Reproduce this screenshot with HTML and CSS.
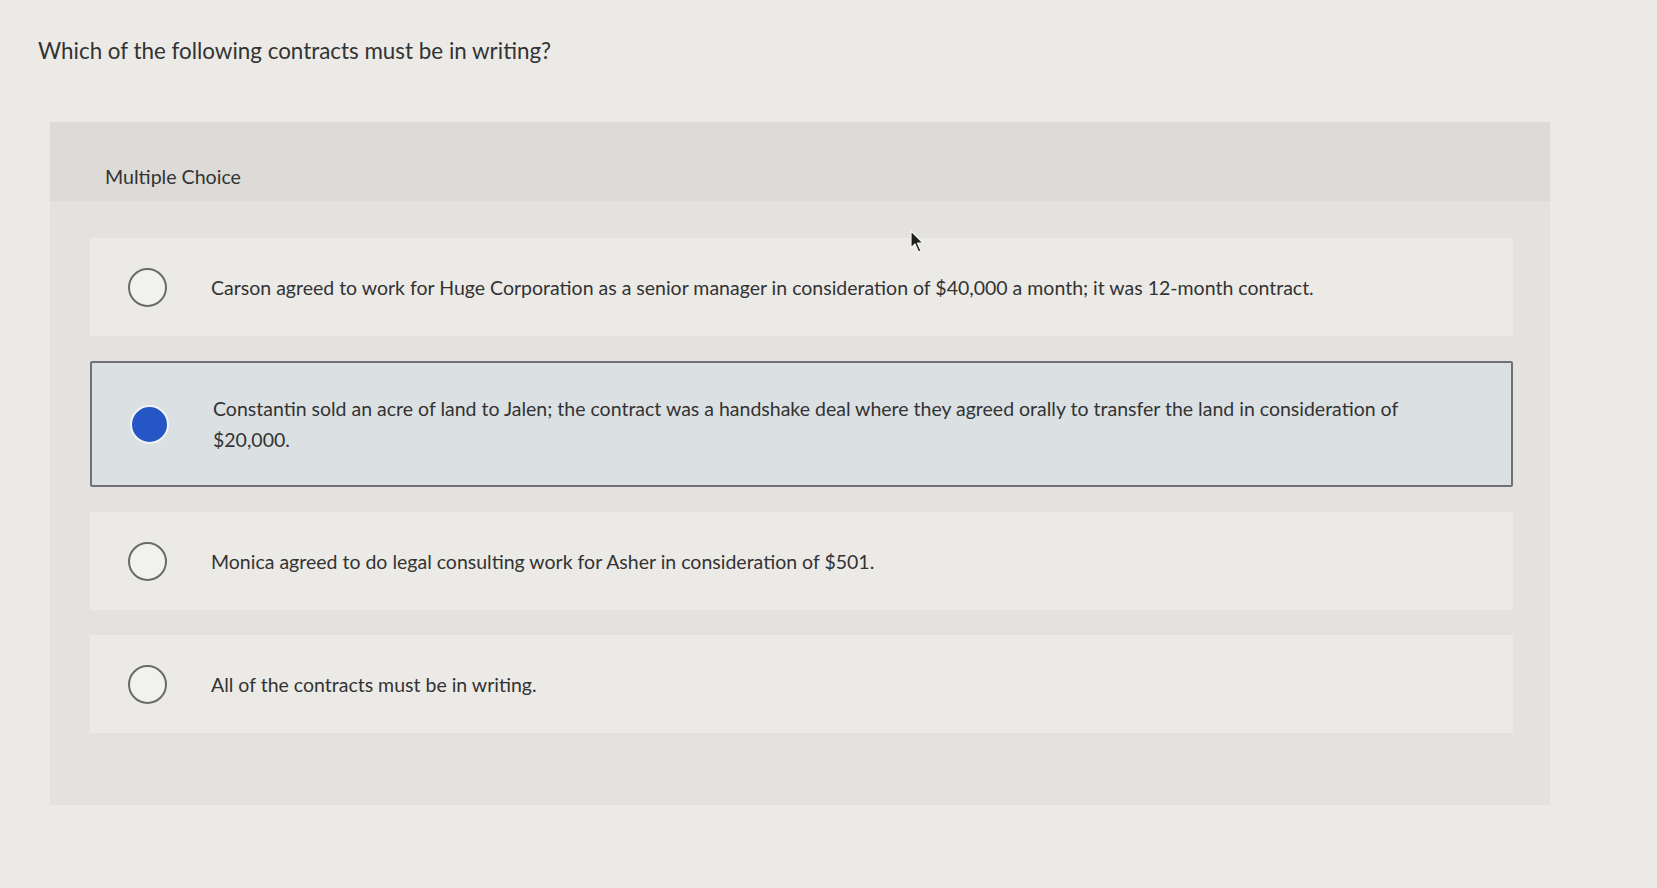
FILE: index.html
```html
<!DOCTYPE html>
<html lang="en">
<head>
  <meta charset="UTF-8" />
  <meta name="viewport" content="width=device-width, initial-scale=1" />
  <title>Multiple Choice</title>
  <link rel="stylesheet" href="styles.css">
</head>
<body>

  <p class="question">Which of the following contracts must be in writing?</p>

  <div class="panel">
    <div class="panel-header">Multiple Choice</div>

    <div class="panel-body">
      <label class="option">
        <span class="radio"></span>
        <span class="option-text">Carson agreed to work for Huge Corporation as a senior manager in consideration of $40,000 a month; it was 12-month contract.</span>
      </label>

      <label class="option selected">
        <span class="radio"></span>
        <span class="option-text">Constantin sold an acre of land to Jalen; the contract was a handshake deal where they agreed orally to transfer the land in consideration of $20,000.</span>
      </label>

      <label class="option">
        <span class="radio"></span>
        <span class="option-text">Monica agreed to do legal consulting work for Asher in consideration of $501.</span>
      </label>

      <label class="option">
        <span class="radio"></span>
        <span class="option-text">All of the contracts must be in writing.</span>
      </label>
    </div>
  </div>

  <!-- mouse pointer -->
  <svg class="cursor" width="16" height="24" viewBox="0 0 16 24">
    <path d="M1 1 L1 18 L5 14 L8.5 22 L11 21 L7.5 13 L13 13 Z" fill="#1e1e1e" stroke="#f4f4f4" stroke-width="1.2" stroke-linejoin="round"/>
  </svg>

</body>
</html>
```

FILE: styles.css
```css
body {
  margin: 0;
  background: #ebeae7;
  font-family: Lato, "Open Sans", Arial, sans-serif;
  color: #333333;
  position: relative;
  min-height: 888px;
}

.question {
  margin: 0;
  padding: 38px 0 0 38px;
  font-size: 22.4px;
  line-height: 26px;
}

.panel {
  margin: 58px 107px 0 50px;
  background: #e3e2df;
}

.panel-header {
  height: 79px;
  box-sizing: border-box;
  padding: 43px 0 0 55px;
  background: #dcdbd8;
  font-size: 19.6px;
  line-height: 24px;
}

.panel-body {
  display: flex;
  flex-direction: column;
  gap: 25px;
  padding: 37px 37px 72px 40px;
}

.option {
  display: flex;
  align-items: center;
  min-height: 98px;
  padding: 0 80px 0 38px;
  background: #ebeae7;
  font-size: 19.5px;
  line-height: 31px;
  cursor: pointer;
}

.radio {
  flex: none;
  width: 35px;
  height: 35px;
  border: 2px solid #6a6a6a;
  border-radius: 50%;
  margin-right: 44px;
  background: #f1f1ef;
}

.option.selected {
  min-height: 122px;
  border: 2px solid #6e7073;
  border-radius: 2px;
  background: #dbe0e3;
}

.option.selected .radio {
  border: 2px solid #f3f3f3;
  background: #2457c5;
}

.cursor {
  position: absolute;
  left: 910px;
  top: 230px;
}
```
